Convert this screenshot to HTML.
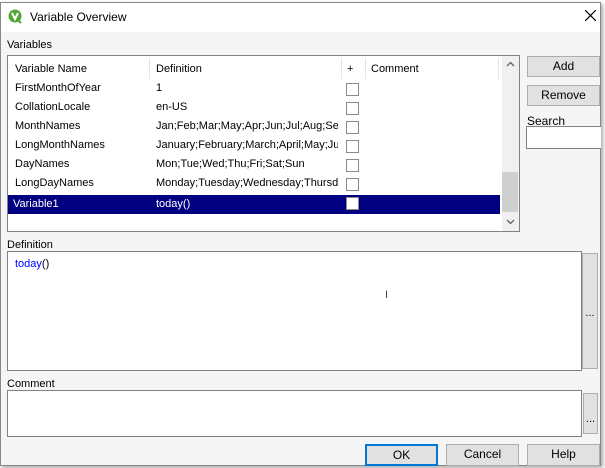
<!DOCTYPE html><html><head><style>
*{box-sizing:border-box}
body{margin:0;width:605px;height:468px;background:#fff;font-family:"Liberation Sans",sans-serif;font-size:11px;color:#000;position:relative;overflow:hidden}
.a{position:absolute}
.win{left:0;top:2px;width:601px;height:464px;border:1px solid #888;background:#f5f5f5;box-shadow:2px 2px 4px rgba(0,0,0,.35)}
.btn{position:absolute;background:#e1e1e1;border:1px solid #adadad;text-align:center;line-height:19px;font-size:12px}
.box{position:absolute;background:#fff;border:1px solid #828282}
.cb{position:absolute;left:346px;width:13px;height:13px;border:1px solid #8a8a8a;background:#fff}
.row{position:absolute;left:8px;width:492px;height:19px;line-height:19px}
.row span{position:absolute}
.clip{width:182px;overflow:hidden;white-space:nowrap}
</style></head><body>
<div class="a win"></div>
<div class="a" style="left:1px;top:3px;width:599px;height:29px;background:#fff"></div>
<svg class="a" style="left:8px;top:9px" width="15" height="15"><circle cx="7" cy="7" r="6.5" fill="#54a536"/><path d="M4 4 L7 10 L10 4" stroke="#fff" stroke-width="2" fill="none"/><path d="M10 11 L13 14" stroke="#54a536" stroke-width="2"/></svg>
<div class="a" style="left:30px;top:10px;font-size:12px">Variable Overview</div>
<svg class="a" style="left:585px;top:10px" width="11" height="11"><path d="M0 0L11 11M11 0L0 11" stroke="#000" stroke-width="1.2"/></svg>
<div class="a" style="left:7px;top:39px">Variables</div>
<div class="box" style="left:7px;top:55px;width:513px;height:177px">
 <div class="a" style="left:494px;top:0;width:17px;height:175px;background:#f0f0f0"></div>
 <div class="a" style="left:494px;top:116px;width:16px;height:40px;background:#cdd0cd"></div>
 <svg class="a" style="left:498px;top:5px" width="9" height="6"><path d="M1 5L4.5 1.5L8 5" stroke="#606060" stroke-width="1.3" fill="none"/></svg>
 <svg class="a" style="left:498px;top:163px" width="9" height="6"><path d="M1 1L4.5 4.5L8 1" stroke="#606060" stroke-width="1.3" fill="none"/></svg>
 <div class="a" style="left:141px;top:2px;width:1px;height:21px;background:#e5e5e5"></div>
 <div class="a" style="left:333px;top:2px;width:1px;height:21px;background:#e5e5e5"></div>
 <div class="a" style="left:357px;top:2px;width:1px;height:21px;background:#e5e5e5"></div>
 <div class="a" style="left:490px;top:2px;width:1px;height:21px;background:#e5e5e5"></div>
</div>
<div class="row" style="top:60px"><span style="left:7px">Variable Name</span><span style="left:148px">Definition</span><span style="left:339px">+</span><span style="left:363px">Comment</span></div>
<div class="row" style="top:79px"><span style="left:7px">FirstMonthOfYear</span><span style="left:148px">1</span></div>
<div class="row" style="top:98px"><span style="left:7px">CollationLocale</span><span style="left:148px">en-US</span></div>
<div class="row" style="top:117px"><span style="left:7px">MonthNames</span><span class="clip" style="left:148px">Jan;Feb;Mar;May;Apr;Jun;Jul;Aug;Sep</span></div>
<div class="row" style="top:136px"><span style="left:7px">LongMonthNames</span><span class="clip" style="left:148px">January;February;March;April;May;June</span></div>
<div class="row" style="top:155px"><span style="left:7px">DayNames</span><span style="left:148px">Mon;Tue;Wed;Thu;Fri;Sat;Sun</span></div>
<div class="row" style="top:174px"><span style="left:7px">LongDayNames</span><span class="clip" style="left:148px">Monday;Tuesday;Wednesday;Thursday</span></div>
<div class="row" style="top:195px;background:#000080;color:#fff"><span style="left:5px">Variable1</span><span style="left:148px">today()</span></div>
<div class="cb" style="top:83px"></div><div class="cb" style="top:102px"></div><div class="cb" style="top:121px"></div><div class="cb" style="top:140px"></div><div class="cb" style="top:159px"></div><div class="cb" style="top:178px"></div><div class="cb" style="top:197px"></div>
<div class="btn" style="left:527px;top:56px;width:73px;height:21px">Add</div>
<div class="btn" style="left:527px;top:85px;width:73px;height:21px">Remove</div>
<div class="a" style="left:527px;top:114px;font-size:12px">Search</div>
<div class="box" style="left:526px;top:126px;width:75px;height:23px;border-right:none"></div>
<div class="a" style="left:7px;top:239px">Definition</div>
<div class="box" style="left:7px;top:251px;width:575px;height:120px"><div class="a" style="left:7px;top:6px;color:#00f">today<span style="color:#000">()</span></div></div>
<div class="a" style="left:385px;top:289px;font-size:11px;color:#444">I</div>
<div class="btn" style="left:582px;top:253px;width:16px;height:116px;line-height:118px;font-size:11px">...</div>
<div class="a" style="left:7px;top:378px">Comment</div>
<div class="box" style="left:7px;top:390px;width:575px;height:47px"></div>
<div class="btn" style="left:583px;top:393px;width:15px;height:41px;line-height:50px;font-size:11px">...</div>
<div class="btn" style="left:365px;top:444px;width:73px;height:22px;border:2px solid #0078d7">OK</div>
<div class="btn" style="left:446px;top:444px;width:73px;height:22px">Cancel</div>
<div class="btn" style="left:527px;top:444px;width:73px;height:22px">Help</div>
</body></html>
